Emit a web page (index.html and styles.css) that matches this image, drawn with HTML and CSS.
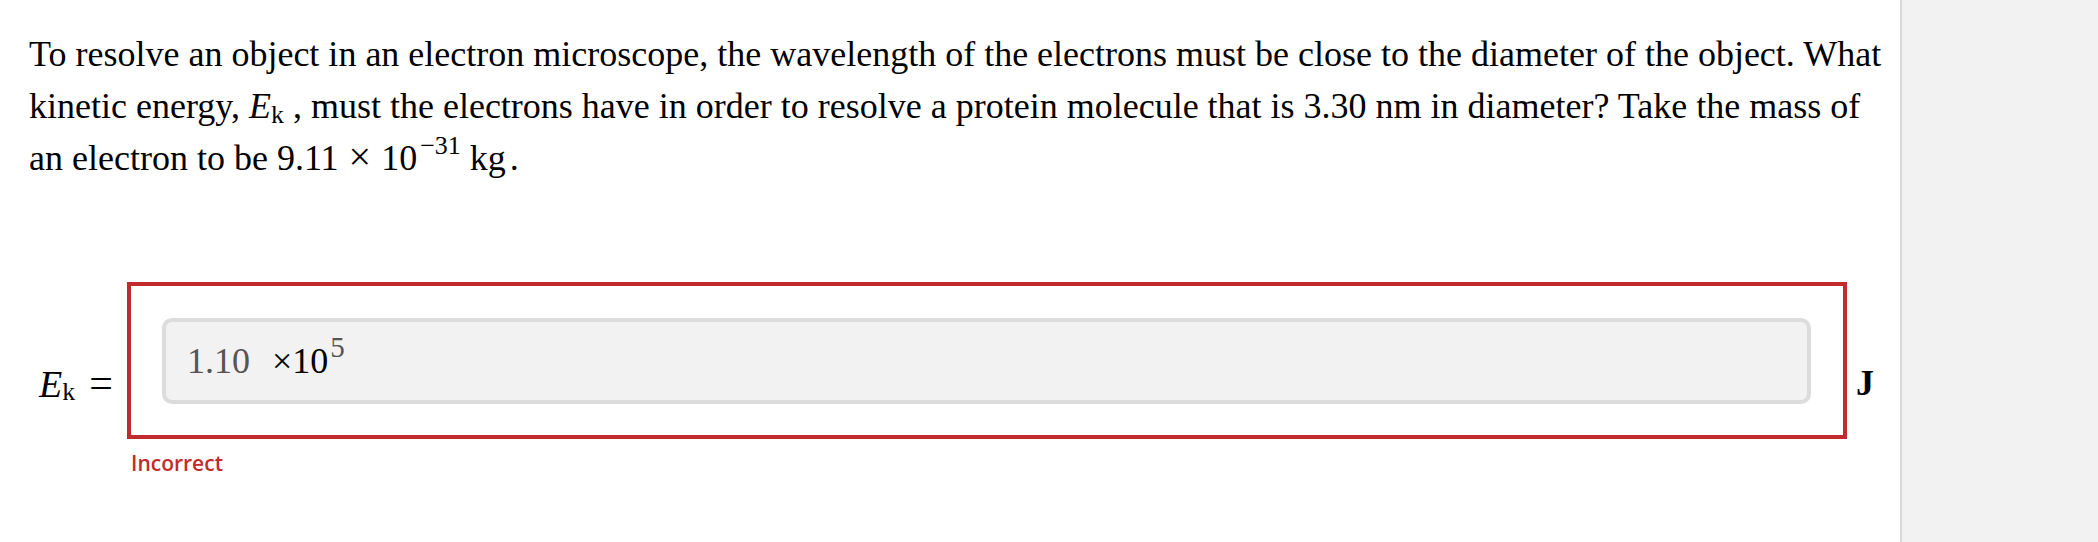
FILE: index.html
```html
<!DOCTYPE html>
<html lang="en">
<head>
    <meta charset="UTF-8">
    <meta name="viewport" content="width=device-width, initial-scale=1.0">
    <title>Electron Microscope Question</title>
    <link rel="stylesheet" href="styles.css">
</head>
<body>
    <main class="question">
        <p class="prompt">
            To resolve an object in an electron microscope, the wavelength of the electrons must be close to the diameter of the object. What kinetic energy, <span class="math"><i>E</i><sub>k</sub></span> , must the electrons have in order to resolve a protein molecule that is 3.30 nm in diameter? Take the mass of an electron to be <span class="math">9.11 <span class="times">×</span> 10<sup>−31</sup></span> <span class="math">kg<span class="dot">.</span></span>
        </p>
        <div class="answer-row">
            <div class="answer-label">
                <i>E</i><sub>k</sub><span class="equals">=</span>
            </div>
            <div class="answer-field">
                <div class="answer-box">
                    <div class="answer-input">
                        <span class="mantissa">1.10</span>
                        <span class="exponent">×10<sup>5</sup></span>
                    </div>
                </div>
                <div class="feedback">Incorrect</div>
            </div>
            <div class="answer-unit">J</div>
        </div>
    </main>
    <aside class="sidebar"></aside>
</body>
</html>
```

FILE: styles.css
```css
body {
    margin: 0;
    padding: 0;
    background-color: #ffffff;
    color: #000000;
    font-family: 'Liberation Serif', 'Times New Roman', serif;
    display: flex;
    min-height: 100vh;
}
.question {
    flex: 1;
    padding: 28px 3px 0 29px;
}
.prompt {
    margin: 0;
    width: 1866px;
    font-size: 36px;
    line-height: 52px;
}
.math i {
    font-style: italic;
}
.math sub {
    font-size: 26px;
    line-height: 0;
    vertical-align: -5px;
}
.math sup {
    font-size: 26px;
    line-height: 0;
    vertical-align: 16px;
    margin-left: 3px;
}
.times {
    margin: 0 1px;
    font-size: 40px;
    line-height: 0;
}
.dot {
    margin-left: 4px;
}
.answer-row {
    display: flex;
    align-items: flex-start;
    margin-top: 98px;
    margin-left: 10px;
    width: 1842px;
}
.answer-label {
    width: 88px;
    flex-shrink: 0;
    margin-top: 81px;
    font-size: 36px;
    line-height: 40px;
}
.answer-label i {
    font-size: 38px;
}
.answer-label sub {
    font-size: 26px;
    line-height: 0;
    vertical-align: -3px;
}
.equals {
    margin-left: 14px;
    font-size: 42px;
}
.answer-field {
    flex: 1;
}
.answer-box {
    border: 4px solid #c22a2d;
    padding: 32px 32px 31px 31px;
}
.answer-input {
    height: 86px;
    box-sizing: border-box;
    border: 4px solid #dcdcdc;
    border-radius: 10px;
    background-color: #f2f2f2;
    padding-left: 21px;
    display: flex;
    align-items: center;
    font-size: 36px;
}
.mantissa {
    color: #555555;
    margin-right: 22px;
}
.exponent {
    color: #000000;
}
.exponent sup {
    color: #555555;
    font-size: 29px;
    line-height: 0;
    vertical-align: 16px;
    margin-left: 2px;
}
.feedback {
    margin-top: 10px;
    padding-left: 4px;
    font-family: 'Open Sans', Arial, sans-serif;
    font-weight: 600;
    font-size: 21px;
    color: #c22a2d;
}
.answer-unit {
    width: 25px;
    margin-left: 9px;
    margin-top: 81px;
    font-size: 36px;
    line-height: 40px;
    font-weight: bold;
}
.sidebar {
    width: 196px;
    flex-shrink: 0;
    background-color: #f2f2f2;
    border-left: 2px solid #d8d8d8;
}
```
